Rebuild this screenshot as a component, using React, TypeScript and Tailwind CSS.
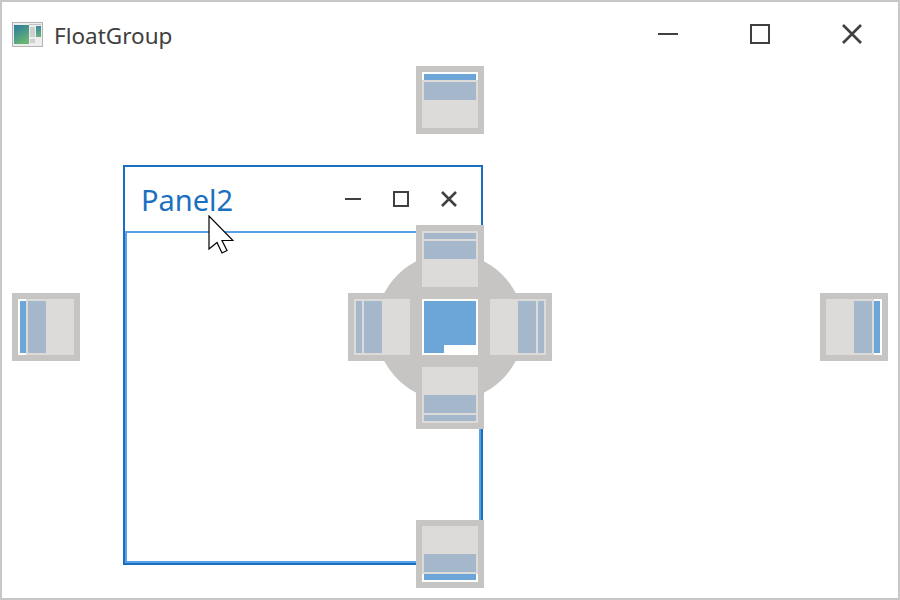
import React from "react";

const MinIcon = ({ w }: { w: number }) => (
  <svg width={w} height={2} className="block" aria-hidden>
    <rect width={w} height={2} fill="#404040" />
  </svg>
);
const MaxIcon = ({ w }: { w: number }) => (
  <svg width={w} height={w} className="block" aria-hidden>
    <rect x={1} y={1} width={w - 2} height={w - 2} fill="none" stroke="#404040" strokeWidth={2} />
  </svg>
);
const CloseIcon = ({ w }: { w: number }) => (
  <svg width={w} height={w} className="block" aria-hidden>
    <path d={`M1 1L${w - 1} ${w - 1}M${w - 1} 1L1 ${w - 1}`} stroke="#404040" strokeWidth={2.6} fill="none" />
  </svg>
);

const AppIcon = () => (
  <svg width={31} height={25} viewBox="0 0 31 25" className="block" aria-hidden>
    <defs>
      <linearGradient id="g" x1="0" y1="0" x2="0.5" y2="1">
        <stop offset="0" stopColor="#2f7a9c" />
        <stop offset="0.5" stopColor="#46968a" />
        <stop offset="1" stopColor="#68b472" />
      </linearGradient>
      <linearGradient id="h" x1="0" y1="0" x2="0" y2="1">
        <stop offset="0" stopColor="#3c8a9c" />
        <stop offset="1" stopColor="#6ab07a" />
      </linearGradient>
    </defs>
    <rect x={0.5} y={0.5} width={30} height={24} fill="#ededed" stroke="#b4b4b4" />
    <rect x={2} y={3} width={15} height={19} fill="url(#g)" />
    <rect x={24} y={4} width={5} height={11} fill="url(#h)" />
    <rect x={17} y={2} width={12} height={1} fill="#c4c4c4" />
    <path d="M18 6h5M18 8h5M18 10h5M18 12h5M18 14h5M18 18h5M18 20h5" stroke="#b0b0b0" strokeWidth={1} />
  </svg>
);

const Cursor = () => (
  <svg width={26} height={39} viewBox="0 0 26 39" className="block" aria-hidden>
    <path d="M1 1V34L9 27.5L14 38L19 35.5L14 25.5H25Z" fill="#fff" stroke="#000" strokeWidth={1.2} strokeLinejoin="miter" />
  </svg>
);

const Tile = ({ children, className = "" }: { children: React.ReactNode; className?: string }) => (
  <div className={`w-[68px] h-[68px] bg-[#c6c5c3] p-[6px] ${className}`}>
    <div className="w-full h-full bg-[#dddbd9]">{children}</div>
  </div>
);

const TopRow = ({ active }: { active?: boolean }) => (
  <div className="flex flex-col">
    <div className={active ? "h-2 bg-white px-[2px] pt-[2px]" : "h-2 px-[2px] pt-[2px]"}>
      <div className={active ? "h-[6px] bg-[#6ca5d8]" : "h-[6px] bg-[#a5b7ca]"} />
    </div>
    <div className="h-[18px] mx-[2px] mt-[2px] bg-[#a5b7ca]" />
  </div>
);

const BottomRow = ({ active }: { active?: boolean }) => (
  <div className="flex flex-col justify-end h-full">
    <div className="h-[18px] mx-[2px] mb-[2px] bg-[#a5b7ca]" />
    <div className={active ? "h-2 bg-white px-[2px]" : "h-2 px-[2px] pb-[2px]"}>
      <div className={active ? "h-[6px] bg-[#6ca5d8]" : "h-[6px] bg-[#a5b7ca]"} />
    </div>
  </div>
);

const LeftCol = ({ active }: { active?: boolean }) => (
  <div className="flex h-full">
    <div className={active ? "w-2 h-full bg-white pl-[2px] py-[2px]" : "w-2 h-full pl-[2px] py-[2px]"}>
      <div className={active ? "w-full h-full bg-[#6ca5d8]" : "w-full h-full bg-[#a5b7ca]"} />
    </div>
    <div className="w-[18px] h-full ml-[2px] py-[2px]">
      <div className="w-full h-full bg-[#a5b7ca]" />
    </div>
  </div>
);

const RightCol = ({ active }: { active?: boolean }) => (
  <div className="flex h-full justify-end">
    <div className="w-[18px] h-full mr-[2px] py-[2px]">
      <div className="w-full h-full bg-[#a5b7ca]" />
    </div>
    <div className={active ? "w-2 h-full bg-white pr-[2px] py-[2px]" : "w-2 h-full pr-[2px] py-[2px]"}>
      <div className={active ? "w-full h-full bg-[#6ca5d8]" : "w-full h-full bg-[#a5b7ca]"} />
    </div>
  </div>
);

export default function App() {
  return (
    <div className="relative w-[900px] h-[600px] overflow-hidden bg-white border-2 border-[#c8c8c8] font-['Noto_Sans','Open_Sans',sans-serif]">
      {/* Title bar */}
      <div className="flex items-center h-[64px] pl-[10px]">
        <AppIcon />
        <span className="ml-[11px] mt-[4px] text-[22.5px] leading-none text-[#404040]">FloatGroup</span>
        <div className="ml-auto flex items-center">
          <div className="w-[92px] flex justify-center"><MinIcon w={20} /></div>
          <div className="w-[92px] flex justify-center"><MaxIcon w={20} /></div>
          <div className="w-[92px] flex justify-center"><CloseIcon w={20} /></div>
        </div>
      </div>

      {/* Floating panel */}
      <div className="ml-[121px] mt-[99px] w-[360px] h-[400px] border-2 border-[#1a6fc0] flex flex-col">
        <div className="h-[66px] shrink-0 flex items-center pl-[16px] border-b-2 border-[#5aa0e6]">
          <span className="text-[29px] leading-none text-[#1a6fc0]">Panel2</span>
          <div className="ml-auto flex items-center">
            <div className="w-[48px] flex justify-center"><MinIcon w={16} /></div>
            <div className="w-[48px] flex justify-center"><MaxIcon w={16} /></div>
            <div className="w-[48px] flex justify-center mr-[8px]"><CloseIcon w={16} /></div>
          </div>
        </div>
        <div className="flex-1 border-2 border-t-0 border-[#5aa0e6]" />
      </div>

      {/* Cursor */}
      <div className="absolute left-[206px] top-[213px]"><Cursor /></div>

      {/* Window-edge dock targets */}
      <Tile className="absolute left-[414px] top-[64px]"><TopRow active /></Tile>
      <Tile className="absolute left-[10px] top-[291px]"><LeftCol active /></Tile>
      <Tile className="absolute left-[818px] top-[291px]"><RightCol active /></Tile>
      <Tile className="absolute left-[414px] top-[518px]"><BottomRow active /></Tile>

      {/* Central dock cross */}
      <div className="absolute left-[346px] top-[223px] grid grid-cols-[68px_68px_68px] grid-rows-[68px_68px_68px]">
        <div className="absolute left-[28px] top-[28px] w-[148px] h-[148px] rounded-full bg-[#c6c5c3]" />
        <Tile className="relative col-start-2 row-start-1"><TopRow /></Tile>
        <Tile className="relative col-start-1 row-start-2"><LeftCol /></Tile>
        <div className="relative col-start-2 row-start-2 bg-[#c6c5c3] p-[6px]">
          <div className="w-full h-full bg-white p-[2px] flex flex-col">
            <div className="h-[44px] bg-[#6ca5d8]" />
            <div className="w-[20px] h-[8px] bg-[#6ca5d8]" />
          </div>
        </div>
        <Tile className="relative col-start-3 row-start-2"><RightCol /></Tile>
        <Tile className="relative col-start-2 row-start-3"><BottomRow /></Tile>
      </div>
    </div>
  );
}
